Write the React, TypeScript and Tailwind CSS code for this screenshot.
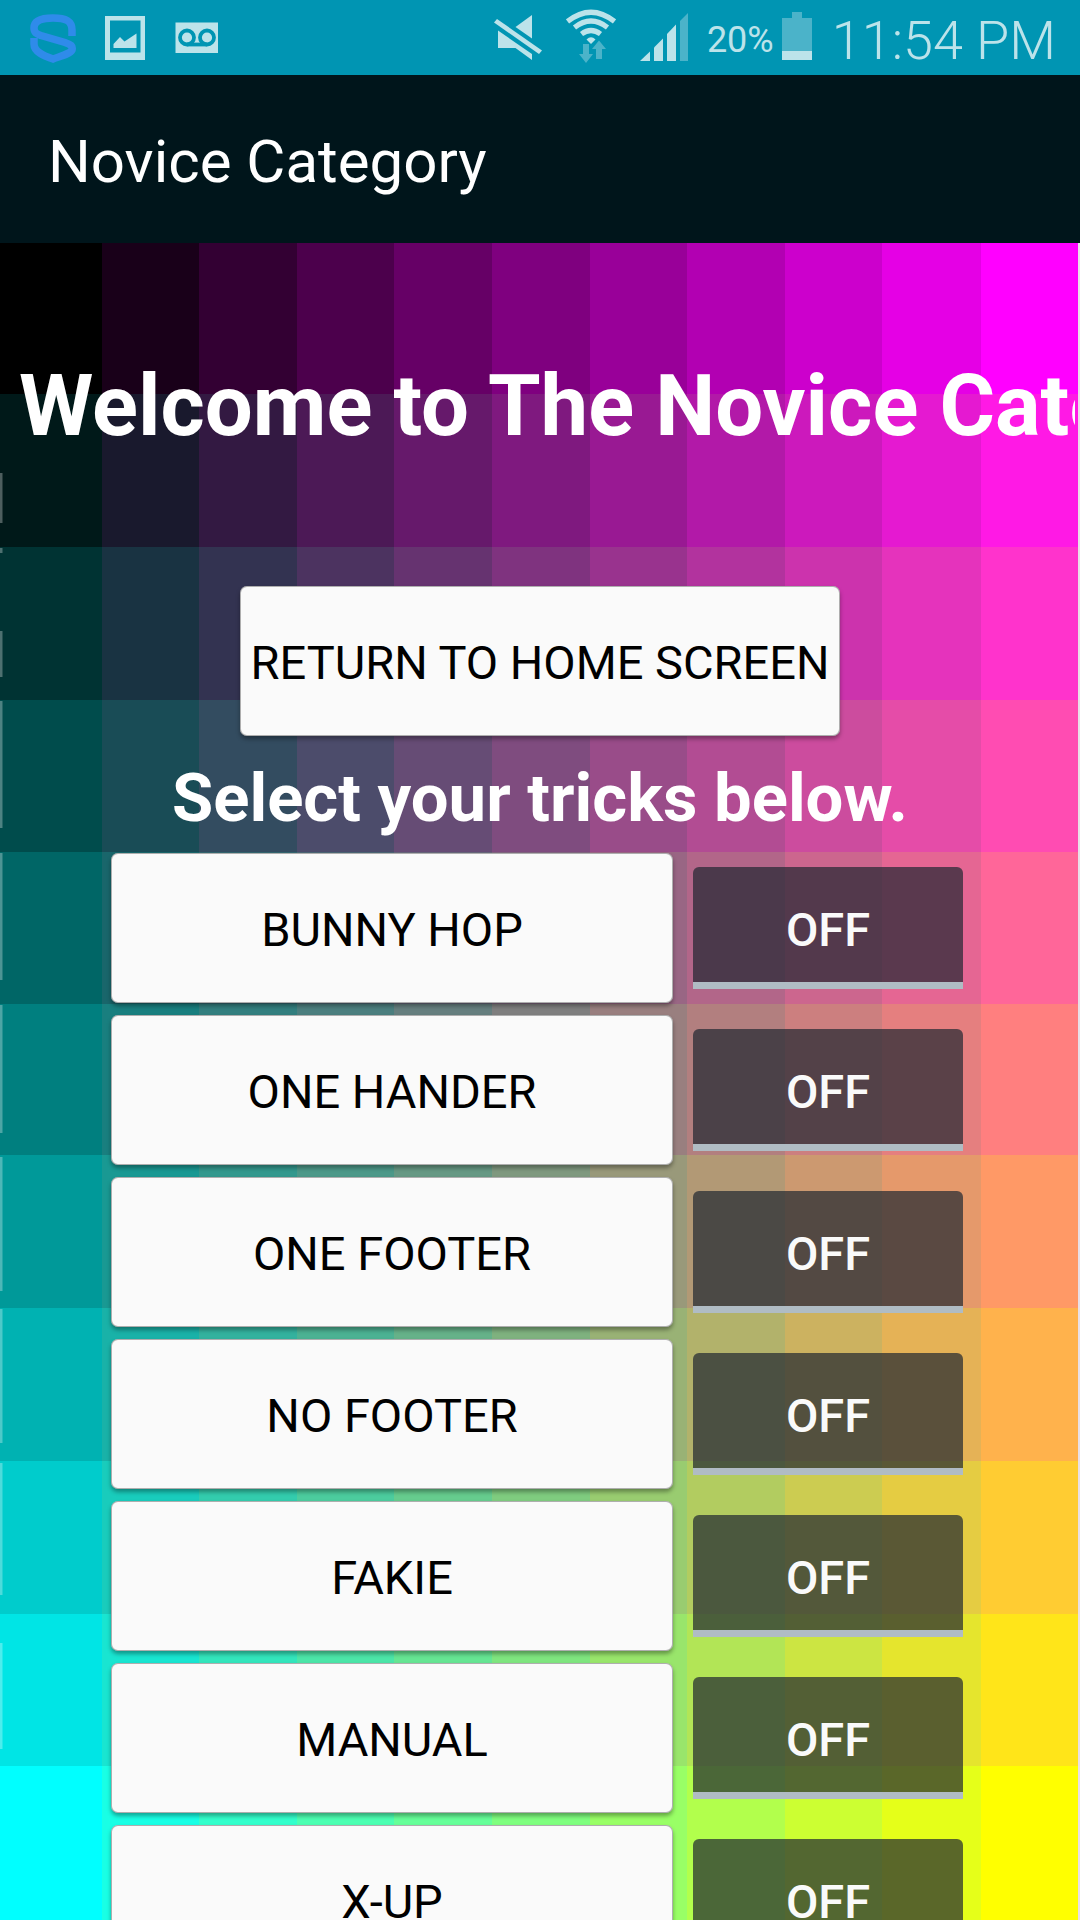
import { useState } from "react";

const tricks = ["Bunny Hop", "One Hander", "One Footer", "No Footer", "Fakie", "Manual", "X-Up"];

// cell edges of the colour chart
const columns = [0, 102, 199, 297, 394, 492, 590, 687, 785, 882, 981, 1078];
const rows = [0, 151, 304, 457, 609, 761, 912, 1065, 1218, 1371, 1523, 1677];

// light marks along the left side of the chart: [top, height]
const edgeMarks = [
  [230, 50],
  [305, 5],
  [388, 46],
  [458, 127],
  [610, 127],
  [762, 128],
  [914, 134],
  [1066, 134],
  [1220, 132],
  [1400, 106],
];

function cellColor(col: number, row: number) {
  const c = col / 10;
  const r = row / 10;
  const blue = c * (1 - r) + r * (1 - c);
  return `rgb(${Math.floor(c * 255)}, ${Math.floor(r * 255)}, ${Math.floor(blue * 255)})`;
}

function ColorChart() {
  return (
    <svg
      className="absolute inset-0 h-full w-full"
      viewBox="0 0 1080 1677"
      preserveAspectRatio="none"
      aria-hidden="true"
    >
      <rect width="1080" height="1677" fill="#e8e0e8" />
      {rows.slice(0, -1).map((y, row) =>
        columns.slice(0, -1).map((x, col) => (
          <rect
            key={`${col}-${row}`}
            x={x}
            y={y}
            width={columns[col + 1] - x}
            height={rows[row + 1] - y}
            fill={cellColor(col, row)}
          />
        )),
      )}
      {edgeMarks.map(([y, height]) => (
        <rect key={y} y={y} width="2.5" height={height} fill="#fff" opacity="0.3" />
      ))}
    </svg>
  );
}

function StatusBar() {
  return (
    <div className="flex h-[75px] shrink-0 items-center justify-between bg-[#0095b3] pr-6 pl-[30px] text-[#bce3ea]">
      <div className="flex items-center gap-[29px]">
        <svg width="46" height="75" viewBox="30 0 46 75" fill="none">
          <path
            d="M72 36V30C72 21 66 18 53 18C40 18 34 21 34 28C34 33 37 34 41 35.500L65 42.500C71 44.500 73 46 72 50C70 54 61 56 53 59C44 56 34 52 34 44V38"
            stroke="#2f8bea"
            strokeWidth="7.500"
          />
        </svg>
        <svg width="40" height="75" viewBox="105 0 40 75" fill="currentColor">
          <path fillRule="evenodd" d="M105 16H145V60H105ZM110 20.500V52.500H140.500V20.500Z" />
          <path d="M113.500 48V44L120 37L124.500 41.500L136.500 33.500V48Z" />
        </svg>
        <svg width="44" height="75" viewBox="174 0 44 75">
          <path d="M175.500 22.500H219V53H175.500Z" fill="currentColor" />
          <g fill="none" stroke="#0095b3" strokeWidth="3.800">
            <circle cx="187" cy="37.500" r="7" />
            <circle cx="207" cy="37.500" r="7" />
            <path d="M187 44.500H207" />
          </g>
        </svg>
      </div>
      <div className="flex items-center">
        <div className="flex items-center gap-6">
          <svg width="48" height="75" viewBox="494 0 48 75" fill="currentColor">
            <path d="M532 15V38.500L515.500 27Z" />
            <path d="M498 30.500L532 54V60L515.500 48H498Z" />
            <path d="M497 19L542 50.500L539 54L494 22.500Z" />
          </svg>
          <svg width="50" height="75" viewBox="568 0 50 75" fill="none">
            <g stroke="currentColor" strokeWidth="5.200">
              <path d="M569.500 21.500Q593 3 616.500 21.500" />
              <path d="M576.500 27.500Q593 14.500 609.500 27.500" />
              <path d="M583.500 34Q593 27 602.500 34" />
            </g>
            <path d="M588.500 39.500Q593 35 597.500 39.500L593 44Z" fill="currentColor" />
            <path d="M585 44H591V54H595L588 63L581 54H585Z" fill="#4bb3c9" />
            <path d="M598 59H604V49H608L601 40.500L594 49H598Z" fill="#4bb3c9" />
          </svg>
          <svg width="49" height="75" viewBox="641 0 49 75" fill="currentColor">
            <path d="M641 61L651 51.500V61Z" />
            <path d="M655 61V47.500L664 38.500V61Z" />
            <path d="M668 61V34L677 24.500V61Z" />
            <path d="M681 61V21L689 13V61Z" fill="#4bb3c9" />
          </svg>
        </div>
        <span className="ml-[18px] pt-[5px] text-[36px] leading-[75px]">20%</span>
        <svg className="mr-5 ml-2" width="30" height="75" viewBox="782 0 30 75">
          <path d="M782 18H792V12H802V18H812V60H782Z" fill="#4bb3c9" />
          <path d="M782 51H812V60H782Z" fill="currentColor" />
        </svg>
        <span className="pt-[5px] text-[54px] leading-[75px] font-light">11:54 PM</span>
      </div>
    </div>
  );
}

const raised =
  "h-[150px] rounded-[7px] bg-[#fafafa] pt-1 text-[47px] text-black uppercase shadow-[inset_0_0_0_1px_rgba(0,0,0,0.3),0_3px_4px_rgba(0,0,0,0.35)]";

function TrickRow({ name }: { name: string }) {
  const [on, setOn] = useState(false);

  return (
    <li className="flex w-full max-w-[852px] items-center gap-5">
      <button type="button" className={`${raised} min-w-0 flex-1`}>
        {name}
      </button>
      <button
        type="button"
        aria-label={name}
        aria-pressed={on}
        onClick={() => setOn(!on)}
        className="h-[122px] w-[270px] shrink-0 rounded-t-[6px] border-b-[7px] border-[#b0bcc4] bg-[#1f2630]/70 bg-clip-padding pt-[11px] text-[47px] font-medium text-[#fafafa]"
      >
        {on ? "ON" : "OFF"}
      </button>
    </li>
  );
}

export default function App() {
  return (
    <div className="flex h-screen flex-col overflow-hidden font-['Roboto',sans-serif]">
      <StatusBar />
      <header className="flex h-[168px] shrink-0 items-center bg-[#00151b] px-12 pt-[5px]">
        <h1 className="text-[60px] text-white">Novice Category</h1>
      </header>
      <main className="relative min-h-0 flex-1">
        <ColorChart />
        <div className="relative h-full overflow-hidden px-[5px] pt-[113px] text-white">
          <div className="flex flex-col items-center">
            <h2 className="w-full overflow-hidden pl-[14px] text-[85px] leading-[100px] font-bold whitespace-nowrap">
              Welcome to The Novice Category
            </h2>
            <button type="button" className={`${raised} mt-[130px] px-[11px]`}>
              Return to home screen
            </button>
            <p className="mt-2 text-[67px] leading-[109px] font-bold">Select your tricks below.</p>
            <ul className="flex w-full flex-col items-center gap-3 pr-[6px]">
              {tricks.map((name) => (
                <TrickRow key={name} name={name} />
              ))}
            </ul>
          </div>
        </div>
      </main>
    </div>
  );
}
